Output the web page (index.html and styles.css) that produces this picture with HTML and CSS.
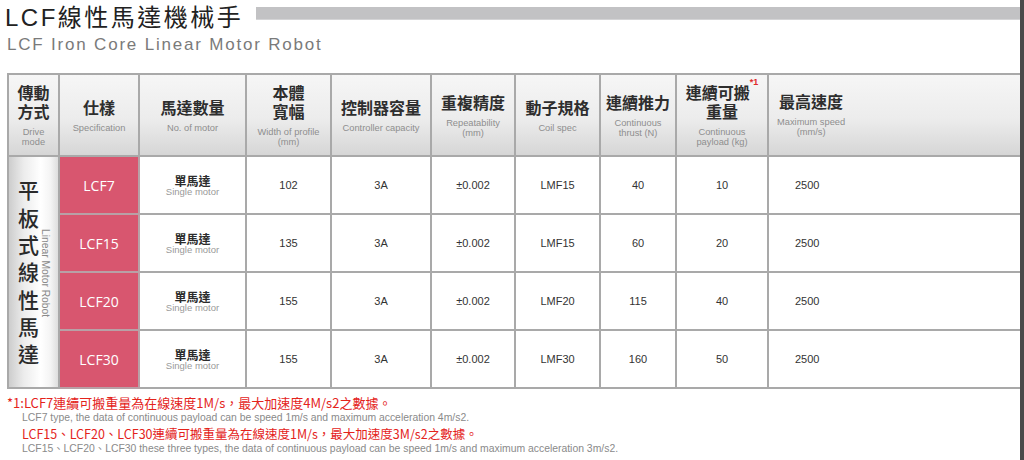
FILE: index.html
```html
<!DOCTYPE html>
<html lang="zh-Hant">
<head>
<meta charset="utf-8">
<title>LCF線性馬達機械手</title>
<link rel="stylesheet" href="styles.css">
</head>
<body>
<div class="page">
  <header class="head">
    <div class="title-row">
      <h1 class="title"><span class="title-lat">LCF</span>線性馬達機械手</h1>
      <div class="title-bar"></div>
    </div>
    <div class="subtitle">LCF Iron Core Linear Motor Robot</div>
  </header>

  <table class="spec">
    <colgroup>
      <col class="w1"><col class="w2"><col class="w3"><col class="w4"><col class="w5">
      <col class="w6"><col class="w7"><col class="w8"><col class="w9"><col class="w10">
    </colgroup>
    <thead>
      <tr>
        <th><div class="zh">傳動<br>方式</div><div class="en">Drive<br>mode</div></th>
        <th><div class="zh">仕樣</div><div class="en">Specification</div></th>
        <th><div class="zh">馬達數量</div><div class="en">No. of motor</div></th>
        <th><div class="zh">本體<br>寬幅</div><div class="en">Width of profile<br>(mm)</div></th>
        <th><div class="zh">控制器容量</div><div class="en">Controller capacity</div></th>
        <th><div class="zh">重複精度</div><div class="en">Repeatability<br>(mm)</div></th>
        <th><div class="zh">動子規格</div><div class="en">Coil spec</div></th>
        <th><div class="zh">連續推力</div><div class="en">Continuous<br>thrust (N)</div></th>
        <th><div class="zh">連續可搬<sup class="mark">*1</sup><br>重量</div><div class="en">Continuous<br>payload (kg)</div></th>
        <th class="last-h"><div class="last-box"><div class="zh">最高速度</div><div class="en">Maximum speed<br>(mm/s)</div></div></th>
      </tr>
    </thead>
    <tbody>
      <tr>
        <td class="mode" rowspan="4">
          <div class="mode-in">
            <div class="mode-zh">平<br>板<br>式<br>線<br>性<br>馬<br>達</div>
            <div class="mode-en">Linear Motor Robot</div>
          </div>
        </td>
        <td class="model">LCF7</td>
        <td class="motor"><div class="m-zh">單馬達</div><div class="m-en">Single motor</div></td>
        <td>102</td><td>3A</td><td>±0.002</td><td>LMF15</td><td>40</td><td>10</td>
        <td class="last">2500</td>
      </tr>
      <tr>
        <td class="model">LCF15</td>
        <td class="motor"><div class="m-zh">單馬達</div><div class="m-en">Single motor</div></td>
        <td>135</td><td>3A</td><td>±0.002</td><td>LMF15</td><td>60</td><td>20</td>
        <td class="last">2500</td>
      </tr>
      <tr>
        <td class="model">LCF20</td>
        <td class="motor"><div class="m-zh">單馬達</div><div class="m-en">Single motor</div></td>
        <td>155</td><td>3A</td><td>±0.002</td><td>LMF20</td><td>115</td><td>40</td>
        <td class="last">2500</td>
      </tr>
      <tr>
        <td class="model">LCF30</td>
        <td class="motor"><div class="m-zh">單馬達</div><div class="m-en">Single motor</div></td>
        <td>155</td><td>3A</td><td>±0.002</td><td>LMF30</td><td>160</td><td>50</td>
        <td class="last">2500</td>
      </tr>
    </tbody>
  </table>

  <div class="notes">
    <p class="note-red">*1:LCF7連續可搬重量為在線速度1M/s，最大加速度4M/s2之數據。</p>
    <p class="note-gray">LCF7 type, the data of continuous payload can be speed 1m/s and maximum acceleration 4m/s2.</p>
    <p class="note-red indent">LCF15、LCF20、LCF30連續可搬重量為在線速度1M/s，最大加速度3M/s2之數據。</p>
    <p class="note-gray">LCF15、LCF20、LCF30 these three types, the data of continuous payload can be speed 1m/s and maximum acceleration 3m/s2.</p>
  </div>
</div>
</body>
</html>
```

FILE: styles.css
```css
* { box-sizing: border-box; }

html, body {
  margin: 0;
  padding: 0;
  background: #ffffff;
}

body {
  width: 1024px;
  height: 460px;
  overflow: hidden;
  border-right: 4px solid #4a4a4a;
  font-family: "Liberation Sans", Arial, "Noto Sans CJK TC", sans-serif;
  color: #333;
}

.page {
  width: 1020px;
}

.head {
  padding-left: 5px;
  height: 73px;
}

.title-row {
  display: flex;
  align-items: flex-start;
}

.title {
  margin: 0;
  font-family: "Noto Sans CJK TC", "Noto Sans", sans-serif;
  font-weight: 400;
  font-size: 24px;
  line-height: 32px;
  letter-spacing: 2.5px;
  color: #222;
  white-space: nowrap;
}

.title-lat {
  font-family: "Liberation Sans", Arial, sans-serif;
  font-size: 24px;
  letter-spacing: 2.5px;
}

.title-bar {
  flex: 1;
  height: 13px;
  margin-top: 7px;
  margin-left: 13px;
  background: #c2c2c4;
  border-bottom: 1px solid #d4d4d6;
}

.subtitle {
  margin-top: 2px;
  font-family: "Liberation Sans", Arial, sans-serif;
  font-size: 17px;
  line-height: 18px;
  letter-spacing: 1.8px;
  color: #7a7a7a;
  padding-left: 2px;
}

/* table */
.spec {
  margin-left: 7px;
  width: 1013px;
  border-collapse: collapse;
  table-layout: fixed;
  border: 2px solid #9e9e9e;
}

.w1 { width: 51px; }
.w2 { width: 80px; }
.w3 { width: 107px; }
.w4 { width: 85px; }
.w5 { width: 100px; }
.w6 { width: 84px; }
.w7 { width: 85px; }
.w8 { width: 76px; }
.w9 { width: 92px; }
.w10 { width: 253px; }

.spec th,
.spec td {
  border: 2px solid #a9a9a9;
  text-align: center;
  vertical-align: middle;
  padding: 0;
}

.spec th {
  height: 82px;
  background: linear-gradient(to bottom, #f6f6f6 0%, #ececec 55%, #d6d6d6 100%);
  font-weight: normal;
}

.zh {
  font-family: "Noto Sans CJK TC", sans-serif;
  font-weight: 700;
  font-size: 16px;
  line-height: 19px;
  color: #2e2e2e;
}

.en {
  margin-top: 6px;
  font-family: "Liberation Sans", Arial, sans-serif;
  font-size: 9.3px;
  line-height: 10px;
  color: #8e8e8e;
}

.mark {
  font-family: "Liberation Sans", Arial, sans-serif;
  font-size: 9px;
  font-weight: 700;
  color: #e0292a;
  vertical-align: top;
  line-height: 9px;
  position: relative;
  top: -5px;
}

.spec th.last-h,
.spec td.last {
  text-align: left;
}

.last-box {
  display: inline-block;
  text-align: center;
  margin-left: 8px;
}

.spec td.last {
  padding-left: 26px;
}

.spec td {
  height: 58px;
  background: #fff;
  font-size: 11px;
  color: #333;
}

.spec td.model {
  background: #d8566f;
  color: #fff;
  font-family: "Open Sans", "Noto Sans", sans-serif;
  font-size: 14px;
  border-color: #b8a0a6;
}

.m-zh {
  font-family: "Noto Sans CJK TC", sans-serif;
  font-weight: 700;
  font-size: 12px;
  line-height: 13px;
  color: #2c2c2c;
}

.m-en {
  font-size: 9.5px;
  line-height: 10px;
  color: #9a9a9a;
}

.spec td.mode {
  background: linear-gradient(to right, #cdcdcd 0%, #ececec 30%, #ffffff 65%, #f4f4f4 85%, #dedede 100%);
}

.mode-in {
  display: flex;
  justify-content: center;
  align-items: center;
  padding-left: 2px;
}

.mode-zh {
  font-family: "Noto Sans CJK TC", sans-serif;
  font-weight: 500;
  font-size: 21px;
  line-height: 27.3px;
  color: #2a2a2a;
}

.mode-en {
  writing-mode: vertical-rl;
  font-size: 10.3px;
  color: #8a8a8a;
  margin-left: 1px;
  margin-top: 2px;
}

/* notes */
.notes {
  padding-left: 7px;
  margin-top: 5px;
}

.notes p {
  margin: 0;
}

.note-red {
  font-family: "Noto Sans CJK TC", sans-serif;
  font-size: 13px;
  line-height: 17px;
  color: #e4231b;
}

.note-red.indent {
  padding-left: 15px;
  margin-top: 1px;
  font-size: 12.5px;
}

.note-gray {
  padding-left: 15px;
  font-family: "Liberation Sans", Arial, "Noto Sans CJK TC", sans-serif;
  font-size: 10.4px;
  line-height: 13px;
  color: #8a8a8a;
}
```
